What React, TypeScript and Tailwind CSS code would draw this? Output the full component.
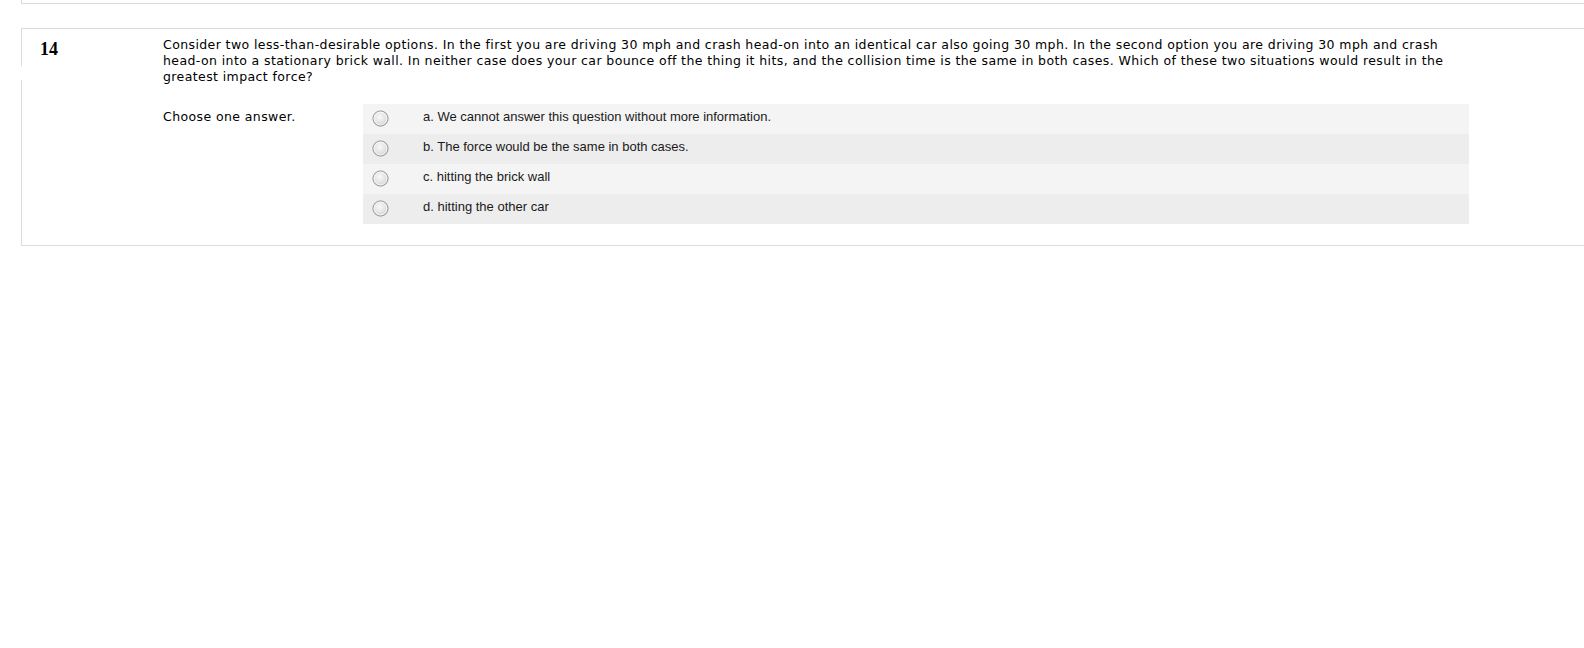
import { useState } from 'react';

const options = [
  { key: 'a', text: 'a. We cannot answer this question without more information.' },
  { key: 'b', text: 'b. The force would be the same in both cases.' },
  { key: 'c', text: 'c. hitting the brick wall' },
  { key: 'd', text: 'd. hitting the other car' },
];

const verdana = { fontFamily: '"DejaVu Sans", Verdana, sans-serif' };

function Radio({ checked }: { checked: boolean }) {
  return (
    <svg width="17" height="17" viewBox="0 0 17 17" className="block">
      <defs>
        <radialGradient id="rg" cx="45%" cy="40%" r="65%">
          <stop offset="0%" stopColor="#f9f9f9" />
          <stop offset="60%" stopColor="#e2e2e2" />
          <stop offset="100%" stopColor="#c4c4c4" />
        </radialGradient>
      </defs>
      <circle cx="8.5" cy="8.5" r="7.6" fill="url(#rg)" stroke="#959595" strokeWidth="1" />
      <circle cx="8.5" cy="8.5" r="6.3" fill="none" stroke="#f8f8f8" strokeWidth="0.9" />
      {checked && <circle cx="8.5" cy="8.5" r="3" fill="#333" />}
    </svg>
  );
}

export default function App() {
  const [answer, setAnswer] = useState<string | null>(null);

  return (
    <div className="min-h-screen bg-white pl-[21px]">
      {/* previous question box (cut off at the top) */}
      <div className="h-[4px] border-l border-b border-[#dcdcdc]" />

      {/* Question 14 */}
      <div className="relative mt-[24px] flex border-t border-l border-b border-[#dcdcdc]">
        <div className="absolute left-[-1px] top-[37px] h-[14px] w-[1px] bg-white" />
        <div className="w-[141px] shrink-0 pl-[18px] pt-[7px]">
          <span
            className="text-[18px] font-bold text-black"
            style={{ fontFamily: '"Liberation Serif", serif' }}
          >
            14
          </span>
        </div>

        <div className="w-[1306px] shrink-0 pt-[8px] pb-[21px]">
          <p className="text-[12.5px] leading-[16px] tracking-[0.4px] text-black" style={verdana}>
            Consider two less-than-desirable options. In the first you are driving 30 mph and crash head-on into an identical car also going 30 mph. In the second option you are driving 30 mph and crash head-on into a stationary brick wall. In neither case does your car bounce off the thing it hits, and the collision time is the same in both cases. Which of these two situations would result in the greatest impact force?
          </p>

          <div className="mt-[19px] flex">
            <div
              className="w-[200px] shrink-0 pt-[4px] text-[12.5px] tracking-[0.4px] text-black"
              style={verdana}
            >
              Choose one answer.
            </div>
            <div className="flex-1">
              {options.map((o, i) => (
                <label
                  key={o.key}
                  className={`flex h-[30px] cursor-pointer items-center pb-[4px] ${i % 2 === 0 ? 'bg-[#f4f4f4]' : 'bg-[#ededed]'}`}
                  onClick={() => setAnswer(o.key)}
                >
                  <div className="ml-[9px] mt-[3px] w-[51px]">
                    <Radio checked={answer === o.key} />
                  </div>
                  <span
                    className="text-[13px] text-[#1a1a1a]"
                    style={{ fontFamily: '"Liberation Sans", Arial, sans-serif' }}
                  >
                    {o.text}
                  </span>
                </label>
              ))}
            </div>
          </div>
        </div>
      </div>
    </div>
  );
}
